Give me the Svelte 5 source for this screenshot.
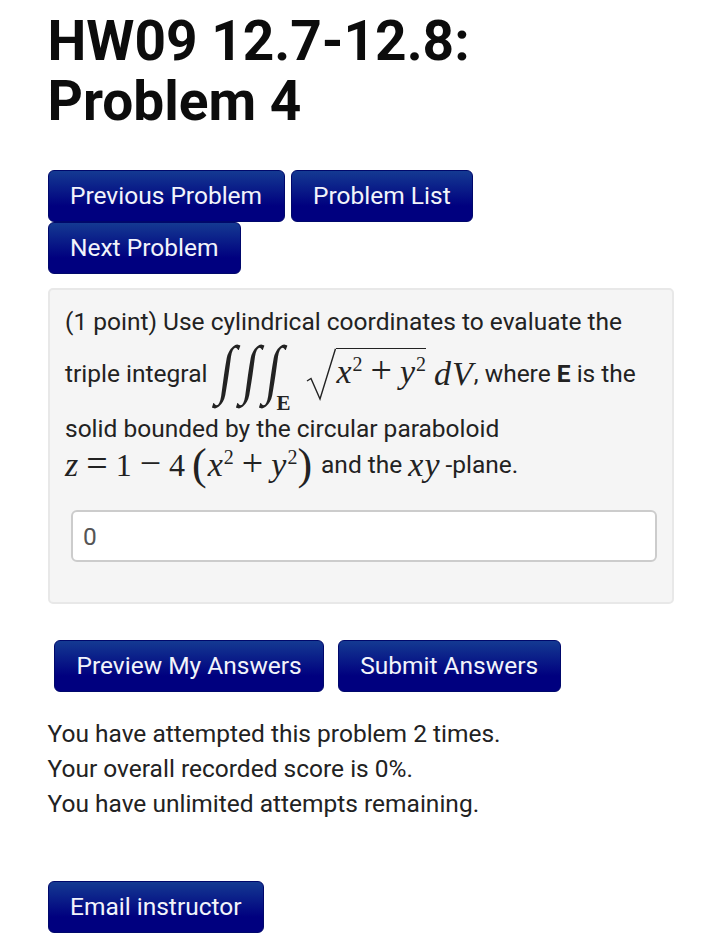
<script>
    const statusLines = [
        "You have attempted this problem 2 times.",
        "Your overall recorded score is 0%.",
        "You have unlimited attempts remaining."
    ];
</script>

<div class="page">
    <h1>HW09 12.7-12.8:<br />Problem 4</h1>

    <div class="nav-buttons">
        <button class="btn">Previous Problem</button>
        <button class="btn">Problem List</button>
        <button class="btn">Next Problem</button>
    </div>

    <div class="well">
        <div class="line">(1 point) Use cylindrical coordinates to evaluate the</div>
        <div class="line integral-line">
            <span>triple integral</span>
            <span class="math integrals">
                <span class="int">∫</span><span class="int">∫</span><span class="int">∫</span>
                <b class="sub">E</b>
            </span>
            <span class="math root">
                <svg class="surd" width="30" height="54" viewBox="0 0 30 54">
                    <path d="M1 33 L5 30.5 L14 51 L29.5 0.8" fill="none" stroke="#222" stroke-width="1.4" />
                </svg>
                <span class="radicand"><i>x</i><sup>2</sup><span class="op">+</span><i>y</i><sup>2</sup></span>
            </span>
            <span class="math dv"><i>dV</i></span><span class="after-dv">, where <b>E</b> is the</span>
        </div>
        <div class="line">solid bounded by the circular paraboloid</div>
        <div class="line last">
            <span class="math eq"><i>z</i><span class="op">=</span>1<span class="op">−</span>4<span class="paren open">(</span><i>x</i><sup>2</sup><span class="op">+</span><i>y</i><sup>2</sup><span class="paren">)</span></span>
            <span class="and">and the</span>
            <span class="math xy"><i>xy</i></span><span>-plane.</span>
        </div>
        <input class="answer" type="text" value="0" />
    </div>

    <div class="submit-buttons">
        <button class="btn">Preview My Answers</button>
        <button class="btn">Submit Answers</button>
    </div>

    <div class="status">
        {#each statusLines as line}
            <div>{line}</div>
        {/each}
    </div>

    <button class="btn email">Email instructor</button>
</div>

<style>
    :global(body) {
        margin: 0;
        background: #fff;
    }

    .page {
        padding: 11px 46px 0 47.5px;
        font-family: Roboto, "Liberation Sans", sans-serif;
        font-size: 24.5px;
        color: #222;
    }

    h1 {
        margin: 0 0 39px;
        font-size: 55px;
        line-height: 60px;
        font-weight: 700;
        color: #0c0c0c;
    }

    .nav-buttons {
        display: flex;
        flex-wrap: wrap;
        width: 440px;
        column-gap: 6px;
    }

    .btn {
        height: 52px;
        padding: 0 21.5px 2px;
        border: 1px solid #00086b;
        border-radius: 6px;
        background: linear-gradient(#143a92, #00007f 70%);
        color: #f2f4fb;
        font: inherit;
        font-size: 24.5px;
    }

    .well {
        margin-top: 14px;
        height: 316px;
        box-sizing: border-box;
        padding: 14px 16px 0 15.5px;
        background: #f5f5f5;
        border: 2px solid #e8e8e8;
        border-radius: 5px;
    }

    .line {
        white-space: nowrap;
        display: flex;
        align-items: center;
        line-height: 36px;
    }

    .integral-line {
        height: 70px;
        margin: -1px 0 2px;
    }

    .math {
        font-family: "Liberation Serif", serif;
        font-size: 32px;
    }

    .math i {
        font-size: 34px;
    }

    .integrals {
        position: relative;
        display: inline-flex;
        align-items: center;
        margin-left: 13px;
        height: 70px;
        width: 80px;
    }

    .int {
        display: inline-block;
        width: 23.5px;
        font-size: 52px;
        line-height: 70px;
        transform: translateY(-4px) scaleY(1.25) skewX(-10deg);
    }

    .sub {
        position: absolute;
        left: 56px;
        bottom: -4px;
        font-size: 21px;
        line-height: 20px;
    }

    .root {
        display: inline-flex;
        align-items: flex-start;
        margin-left: 6px;
    }

    .surd {
        display: block;
        margin-top: 1px;
    }

    .radicand {
        margin-top: 1px;
        border-top: 1.4px solid #222;
        line-height: 46px;
        white-space: nowrap;
    }

    sup {
        font-size: 20px;
        line-height: 0;
        margin-left: 1px;
    }

    .op {
        margin: 0 8px;
        font-size: 38px;
        line-height: 0;
    }

    .dv {
        margin-left: 8px;
    }

    .dv i {
        letter-spacing: 1px;
    }

    .after-dv {
        white-space: pre;
    }

    .eq {
        margin-right: 9px;
    }

    .paren {
        font-size: 44px;
        font-weight: 400;
        line-height: 0;
        vertical-align: -3px;
    }

    .open {
        margin-left: 7px;
        margin-right: 1px;
    }

    .xy {
        margin: 0 5px 0 6px;
    }

    .xy i {
        letter-spacing: 1px;
    }

    .answer {
        display: block;
        box-sizing: border-box;
        width: 586px;
        height: 52px;
        margin: 27px 0 0 6px;
        padding: 0 10px;
        background: #fff;
        border: 2px solid #ccc;
        border-radius: 6px;
        color: #555;
        font: inherit;
    }

    .submit-buttons {
        display: flex;
        gap: 13.5px;
        margin: 36px 0 0 6.5px;
    }

    .status {
        margin-top: 24px;
        line-height: 35px;
    }

    .email {
        margin-top: 60px;
    }
</style>
